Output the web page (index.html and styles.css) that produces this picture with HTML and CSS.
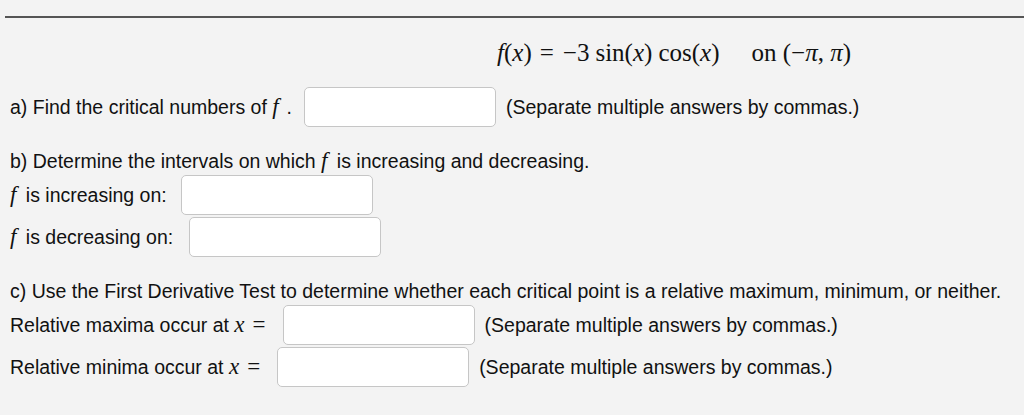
FILE: index.html
```html
<!DOCTYPE html>
<html>
<head>
<meta charset="utf-8">
<link rel="stylesheet" href="styles.css">
</head>
<body>
<div class="rule"></div>
<div class="equation"><i>f</i>(<i>x</i>)<span class="rel">=</span>−3<span class="th"></span>sin(<i>x</i>)<span class="th"></span>cos(<i>x</i>)<span class="on">on (−<i>π</i>, <i>π</i>)</span></div>

<div class="row row-a">
  <span class="label">a) Find the critical numbers of <i class="mv">f</i>&#8201;.</span>
  <span class="box box-a"></span>
  <span class="note">(Separate multiple answers by commas.)</span>
</div>

<div class="heading heading-b">b) Determine the intervals on which <i class="mv">f</i> is increasing and decreasing.</div>
<div class="row row-b1">
  <span class="label"><i class="mv">f</i> is increasing on:</span>
  <span class="box box-b1"></span>
</div>
<div class="row row-b2">
  <span class="label"><i class="mv">f</i> is decreasing on:</span>
  <span class="box box-b2"></span>
</div>

<div class="heading heading-c">c) Use the First Derivative Test to determine whether each critical point is a relative maximum, minimum, or neither.</div>
<div class="row row-c1">
  <span class="label">Relative maxima occur at <i class="mx">x</i><span class="eq">=</span></span>
  <span class="box box-c1"></span>
  <span class="note">(Separate multiple answers by commas.)</span>
</div>
<div class="row row-c2">
  <span class="label">Relative minima occur at <i class="mx">x</i><span class="eq">=</span></span>
  <span class="box box-c2"></span>
  <span class="note">(Separate multiple answers by commas.)</span>
</div>
</body>
</html>
```
FILE: styles.css
```css
html, body {
  margin: 0;
  padding: 0;
  background: #f3f3f3;
}
body {
  font-family: "Liberation Sans", Arial, sans-serif;
  font-size: 19.5px;
  color: #111;
  padding-left: 10px;
  padding-top: 16px;
}
.rule {
  height: 2px;
  background: #555;
  margin-left: -5px;
}
.equation {
  font-family: "Liberation Serif", "Times New Roman", serif;
  font-size: 25px;
  margin-left: 487px;
  height: 30px;
  line-height: 30px;
  margin-top: 20px;
  white-space: nowrap;
}
.equation .rel {
  margin: 0 9px 0 8px;
}
.equation .th {
  display: inline-block;
  width: 6px;
}
.equation .on {
  margin-left: 32px;
}
.mv {
  font-family: "Liberation Serif", "Times New Roman", serif;
  font-size: 23px;
  padding-right: 4px;
}
.mx {
  font-family: "Liberation Serif", "Times New Roman", serif;
  font-size: 23px;
}
.eq {
  font-family: "Liberation Serif", "Times New Roman", serif;
  font-size: 23px;
  margin-left: 8px;
}
.row {
  display: flex;
  align-items: center;
  height: 40px;
  white-space: nowrap;
}
.row-a { margin-top: 19px; }
.row-b1 { margin-top: 2px; }
.row-b2 { margin-top: 2px; }
.row-c1 { margin-top: 2px; }
.row-c2 { margin-top: 2px; }
.box {
  flex: none;
  width: 190px;
  height: 38px;
  background: #fff;
  border: 1px solid #c6c6c6;
  border-radius: 5px;
  margin-left: 10px;
}
.box-a { margin-left: 12px; }
.box-b1 { margin-left: 14px; }
.box-b2 { margin-left: 16px; }
.box-c1 { margin-left: 17px; }
.box-c2 { margin-left: 17px; }
.note {
  margin-left: 10px;
}
.heading {
  height: 24px;
  line-height: 24px;
  white-space: nowrap;
}
.heading-b { margin-top: 22px; }
.heading-c { margin-top: 22px; }
```
